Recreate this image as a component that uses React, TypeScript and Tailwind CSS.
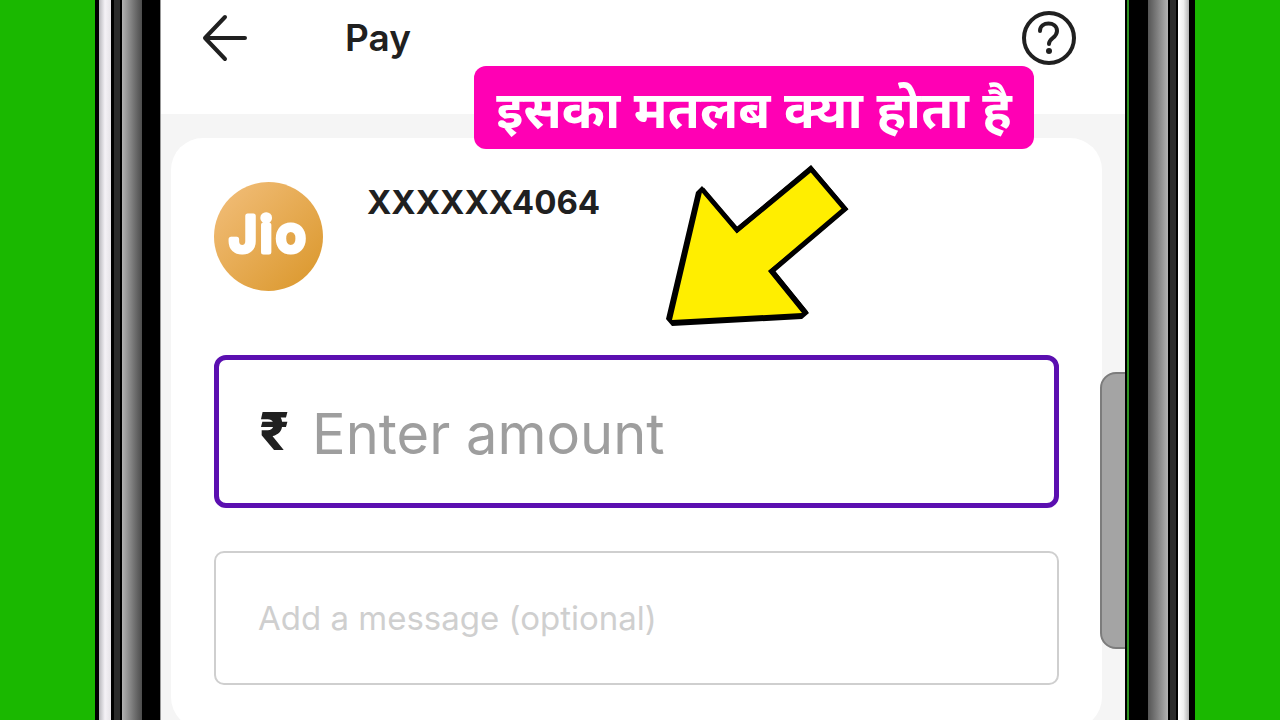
import { useState } from "react";

/* =====================================================
   Payment Screen (phone preview)
===================================================== */

export default function App() {
  const [amount, setAmount] = useState("");
  const [message, setMessage] = useState("");

  return (
    <div className="flex h-screen min-h-[720px] overflow-hidden bg-[#1ab800] pr-[85px] pl-[95px] font-['Inter',sans-serif] text-[#202020]">
      <LeftFrame />

      <main className="relative flex min-w-0 flex-1 flex-col overflow-hidden bg-[#f5f5f5]">
        <header className="flex h-[114px] shrink-0 items-start bg-white pt-2 pr-12 pl-10">
          <button type="button" aria-label="Back" className="mt-1">
            <BackIcon />
          </button>
          <h1 className="ml-24 text-[37px] leading-[60px] font-semibold">
            Pay
          </h1>
          <button type="button" aria-label="Help" className="ml-auto pt-[2px]">
            <HelpIcon />
          </button>
        </header>

        <section className="mt-6 mr-[23px] ml-[10px] shrink-0 rounded-[32px] bg-white px-[43px] pt-11 pb-11">
          <div className="flex gap-11">
            <JioLogo />
            <p className="text-[33px] leading-10 font-bold">XXXXXX4064</p>
          </div>

          <form onSubmit={(e) => e.preventDefault()}>
            <div className="mt-16 flex h-[153px] items-center rounded-xl border-[5px] border-[#5b0fb0] px-10">
              <label
                htmlFor="amount"
                aria-label="Amount"
                className="w-[53px] text-[52px] leading-[72px] font-extrabold"
              >
                ₹
              </label>
              <input
                id="amount"
                inputMode="decimal"
                value={amount}
                onChange={(e) => setAmount(e.target.value)}
                placeholder="Enter amount"
                className="min-w-0 flex-1 pt-1 text-[56px] leading-[72px] outline-none placeholder:text-[#9e9e9e]"
              />
            </div>

            <input
              aria-label="Message"
              value={message}
              onChange={(e) => setMessage(e.target.value)}
              placeholder="Add a message (optional)"
              className="mt-[43px] h-[134px] w-full rounded-[10px] border-2 border-[#cfcfcf] px-[42px] text-[33px] outline-none placeholder:text-[#cfcfcf]"
            />
          </form>
        </section>

        {/* Side panel handle */}
        <div className="absolute top-[372px] -right-1 h-[277px] w-[29px] rounded-l-2xl border-2 border-[#7c7c7c] bg-[#a4a4a4]" />

        {/* Caption and pointer */}
        <p className="absolute top-[66px] left-[313px] flex h-[83px] w-[560px] items-center justify-center rounded-xl bg-[#ff00b4] font-['Noto_Sans',sans-serif] text-[52px] font-bold whitespace-nowrap text-white">
          इसका मतलब क्या होता है
        </p>
        <Pointer />
      </main>

      <RightFrame />
    </div>
  );
}

/* =====================================================
   Phone Frame
===================================================== */

function LeftFrame() {
  return (
    <div className="flex shrink-0">
      <div className="w-1 bg-black" />
      <div className="w-3 bg-linear-to-r from-[#b8b8bc] via-[#f4f2f6] to-[#e6e4e8]" />
      <div className="w-[3px] bg-black" />
      <div className="w-[6px] bg-[#2b2b2b]" />
      <div className="w-[2px] bg-black" />
      <div className="w-5 bg-linear-to-r from-[#b2b2b2] to-[#4c4c4c]" />
      <div className="w-[18px] bg-black" />
      <div className="w-px bg-[#999999]" />
    </div>
  );
}

function RightFrame() {
  return (
    <div className="flex shrink-0">
      <div className="w-[2px] bg-black" />
      <div className="w-[2px] bg-[#2f9422]" />
      <div className="w-[19px] bg-black" />
      <div className="w-5 bg-linear-to-r from-[#555555] to-[#b4b4b4]" />
      <div className="w-[2px] bg-black" />
      <div className="w-[6px] bg-[#2b2b2b]" />
      <div className="w-[2px] bg-black" />
      <div className="w-[11px] bg-linear-to-r from-white via-[#f0f0f0] to-[#b4b4b4]" />
      <div className="w-[6px] bg-black" />
    </div>
  );
}

/* =====================================================
   Icons
===================================================== */

function BackIcon() {
  return (
    <svg width="48" height="52" viewBox="0 0 48 52" fill="none" stroke="#202020" strokeWidth="4" strokeLinecap="round" strokeLinejoin="round">
      <path d="M24 5 4 26l20 21M5 26h39" />
    </svg>
  );
}

function HelpIcon() {
  return (
    <svg width="56" height="56" viewBox="0 0 56 56" fill="none" stroke="#202020" strokeWidth="4" strokeLinecap="round">
      <circle cx="28" cy="28" r="25" />
      <path d="M19 21C19 11 36 11 36 21C36 28 28 28 28 34" />
      <circle cx="28" cy="41" r="3" fill="#202020" stroke="none" />
    </svg>
  );
}

function JioLogo() {
  return (
    <svg width="109" height="109" viewBox="0 0 109 109" role="img" aria-label="Jio">
      <defs>
        <linearGradient id="jio" x1="0" y1="0" x2="1" y2="1">
          <stop offset="0.1" stopColor="#f0bb74" />
          <stop offset="0.9" stopColor="#dc9a31" />
        </linearGradient>
      </defs>
      <circle cx="54.5" cy="54.5" r="54.5" fill="url(#jio)" />
      <text
        x="15 46 62"
        y="70"
        fontSize="49"
        fill="#fff"
        stroke="#fff"
        strokeWidth="5"
        strokeLinejoin="round"
        className="font-['Inter',sans-serif] font-medium"
      >
        Jio
      </text>
    </svg>
  );
}

function Pointer() {
  return (
    <svg
      width="186"
      height="164"
      viewBox="664 164 186 164"
      className="absolute top-[164px] left-[503px]"
      aria-hidden="true"
    >
      <path d="M811 165 848 209 775 271 809 313 802 319 672 326 666 319 696 192 702 186 737 227Z" fill="#000" />
      <path d="M811 171 844 209 768 271 802 313 672 320 702 192 737 233Z" fill="#ffee00" />
      <path d="M702 189 737 230 811 169 845 209 772 271 806 313" fill="none" stroke="#000" strokeWidth="5" />
    </svg>
  );
}
